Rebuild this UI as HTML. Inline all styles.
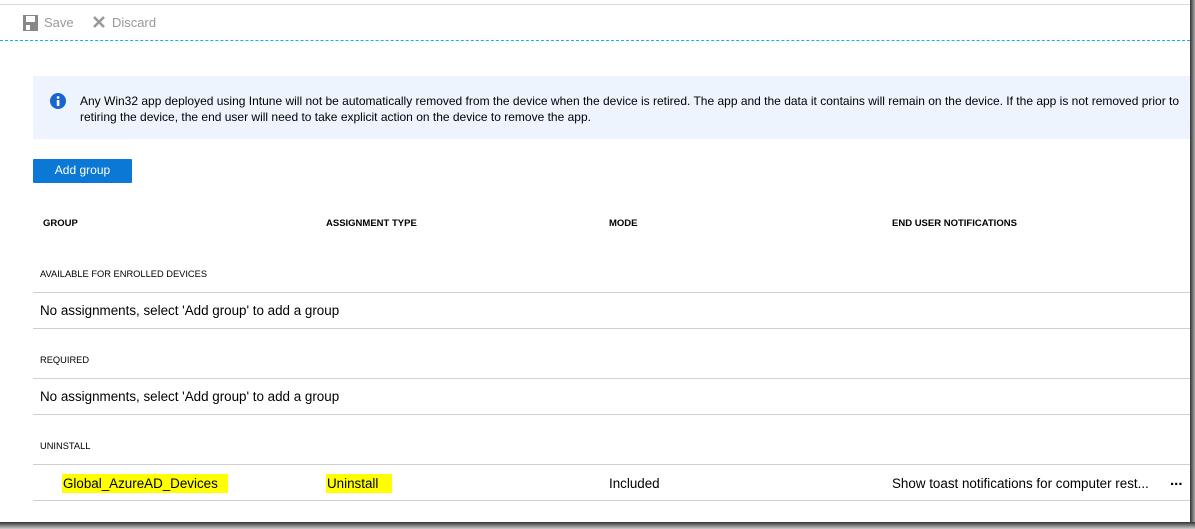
<!DOCTYPE html>
<html><head><meta charset="utf-8"><style>
*{margin:0;padding:0;box-sizing:border-box}
body{width:1195px;height:529px;background:#fff;font-family:"Liberation Sans",sans-serif;color:#000;position:relative;overflow:hidden}
.a{position:absolute;white-space:nowrap}
.line{position:absolute;left:33px;width:1157px;height:1px;background:#d0d0d0}
.h{font-size:9.5px;font-weight:bold;letter-spacing:0}
.s{font-size:9.3px}
.t{font-size:13.4px}
</style></head><body>
<div class="a" style="left:0;top:4px;width:1190px;height:1px;background:#d8d8d8"></div>
<div class="a" style="left:1190px;top:0;width:5px;height:529px;background:linear-gradient(90deg,#333,#aaa)"></div>
<div class="a" style="left:0;top:522px;width:1195px;height:7px;background:linear-gradient(#333,#ccc)"></div>
<svg class="a" style="left:23px;top:15px" width="15" height="16" viewBox="0 0 15 16"><path d="M0 0h15v16H0z" fill="#888"/><rect x="3" y="1" width="9" height="6" fill="#fff"/><rect x="3" y="10" width="4" height="5" fill="#fff"/></svg>
<div class="a" style="left:44px;top:15px;font-size:13px;color:#999">Save</div>
<svg class="a" style="left:92px;top:15px" width="14" height="14" viewBox="0 0 14 14"><path d="M2 2L12 12M12 2L2 12" stroke="#999" stroke-width="2.6"/></svg>
<div class="a" style="left:112px;top:15px;font-size:13px;color:#999">Discard</div>
<div class="a" style="left:0;top:40px;width:1190px;border-top:1px dashed #1ab0e0"></div>
<div class="a" style="left:33px;top:76px;width:1157px;height:63px;background:#eef4fd"></div>
<svg class="a" style="left:50px;top:93px" width="16" height="16"><circle cx="8" cy="8" r="8" fill="#1765cf"/><rect x="6.8" y="7" width="2.6" height="6" fill="#fff"/><circle cx="8.1" cy="4.5" r="1.4" fill="#fff"/></svg>
<div class="a" style="left:80px;top:93px;font-size:12px;line-height:16px">Any Win32 app deployed using Intune will not be automatically removed from the device when the device is retired. The app and the data it contains will remain on the device. If the app is not removed prior to<br>retiring the device, the end user will need to take explicit action on the device to remove the app.</div>
<div class="a" style="left:33px;top:159px;width:99px;height:24px;background:#0a78d4;color:#fff;font-size:12px;text-align:center;line-height:23px;border-radius:1px">Add group</div>
<div class="a h" style="left:43px;top:218px">GROUP</div>
<div class="a h" style="left:326px;top:218px">ASSIGNMENT TYPE</div>
<div class="a h" style="left:609px;top:218px">MODE</div>
<div class="a h" style="left:892px;top:218px">END USER NOTIFICATIONS</div>
<div class="a s" style="left:40px;top:269px">AVAILABLE FOR ENROLLED DEVICES</div>
<div class="line" style="top:292px"></div>
<div class="a t" style="left:40px;top:303px">No assignments, select 'Add group' to add a group</div>
<div class="line" style="top:328px"></div>
<div class="a s" style="left:40px;top:355px">REQUIRED</div>
<div class="line" style="top:378px"></div>
<div class="a t" style="left:40px;top:389px">No assignments, select 'Add group' to add a group</div>
<div class="line" style="top:414px"></div>
<div class="a s" style="left:40px;top:441px">UNINSTALL</div>
<div class="line" style="top:464px"></div>
<div class="a t" style="left:62px;top:474px;background:#ffff00;padding:2px 10px 2px 1px">Global_AzureAD_Devices</div>
<div class="a t" style="left:326px;top:474px;background:#ffff00;padding:2px 14px 2px 1px">Uninstall</div>
<div class="a t" style="left:609px;top:476px">Included</div>
<div class="a t" style="left:892px;top:476px">Show toast notifications for computer rest...</div>
<div class="a" style="left:1170px;top:472px;font-size:15px;font-weight:bold">...</div>
<div class="line" style="top:500px"></div>
</body></html>
